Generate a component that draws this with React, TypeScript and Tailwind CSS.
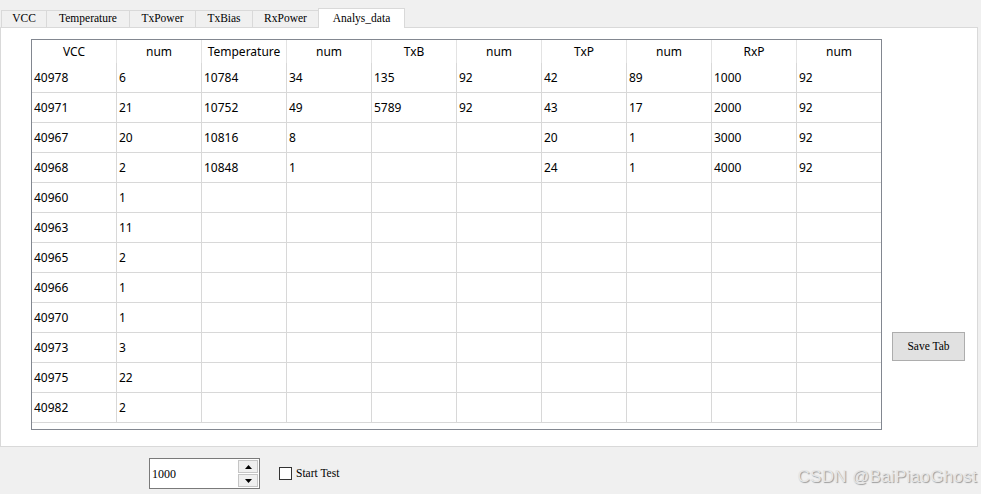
import React from 'react'

const tabs = [
  { label: 'VCC', w: 'w-[45px]' },
  { label: 'Temperature', w: 'w-[83px]' },
  { label: 'TxPower', w: 'w-[66px]' },
  { label: 'TxBias', w: 'w-[57px]' },
  { label: 'RxPower', w: 'w-[66px]' },
]

const headers = ['VCC', 'num', 'Temperature', 'num', 'TxB', 'num', 'TxP', 'num', 'RxP', 'num']

const rows: string[][] = [
  ['40978', '6', '10784', '34', '135', '92', '42', '89', '1000', '92'],
  ['40971', '21', '10752', '49', '5789', '92', '43', '17', '2000', '92'],
  ['40967', '20', '10816', '8', '', '', '20', '1', '3000', '92'],
  ['40968', '2', '10848', '1', '', '', '24', '1', '4000', '92'],
  ['40960', '1'],
  ['40963', '11'],
  ['40965', '2'],
  ['40966', '1'],
  ['40970', '1'],
  ['40973', '3'],
  ['40975', '22'],
  ['40982', '2'],
]

const serif = "font-['PMingLiU','Liberation_Serif',serif]"
const sans = "font-['Noto_Sans','Liberation_Sans',sans-serif]"

function DataTable() {
  return (
    <div className={`w-[851px] h-[391px] border border-[#828790] bg-white ${sans} text-[12px] text-black`}>
      {/* header */}
      <div className="grid grid-cols-[repeat(9,85px)_84px] h-[23px]">
        {headers.map((h, i) => (
          <div
            key={i}
            className={`flex items-center justify-center ${i < 9 ? 'border-r border-[#e3e3e3]' : ''}`}
          >
            {h}
          </div>
        ))}
      </div>
      {/* body */}
      {rows.map((r, ri) => (
        <div key={ri} className="grid grid-cols-[repeat(9,85px)_84px] h-[30px]">
          {Array.from({ length: 10 }).map((_, ci) => (
            <div
              key={ci}
              className={`flex items-center pl-[2px] border-b border-[#d8d8d8] ${ci < 9 ? 'border-r' : ''}`}
            >
              {r[ci] ?? ''}
            </div>
          ))}
        </div>
      ))}
    </div>
  )
}

export default function App() {
  return (
    <div className="relative w-[981px] h-[494px] bg-[#f0f0f0] flex flex-col overflow-hidden">
      {/* Tab bar */}
      <div className={`flex items-end h-[27px] pl-[1px] ${serif} text-[11.5px] text-black`}>
        {tabs.map((t) => (
          <div
            key={t.label}
            className={`${t.w} h-[17px] flex items-center justify-center border-t border-l border-[#d9d9d9] bg-[#f0f0f0]`}
          >
            {t.label}
          </div>
        ))}
        <div className="relative z-10 w-[87px] h-[20px] -mb-px flex items-center justify-center border border-b-0 border-[#d9d9d9] bg-white">
          Analys_data
        </div>
      </div>

      {/* Tab pane */}
      <div className="w-[978px] h-[420px] bg-white border border-[#d9d9d9] flex items-start">
        <div className="ml-[30px] mt-[11px]">
          <DataTable />
        </div>
        <button
          className={`ml-[10px] mt-[304px] w-[73px] h-[29px] bg-[#e1e1e1] border border-[#adadad] ${serif} text-[11.5px] text-black`}
        >
          Save Tab
        </button>
      </div>

      {/* Bottom controls */}
      <div className={`flex items-start pt-[11px] pl-[149px] ${serif} text-[12px] text-black`}>
        <div className="w-[111px] h-[31px] bg-white border border-[#7a7a7a] flex items-center">
          <span className="flex-1 pl-[2px]">1000</span>
          <div className="flex flex-col w-[20px] h-[27px] mr-[1px] gap-px">
            <div className="flex-1 flex items-center justify-center bg-[#efefef] border border-[#c5c5c5]">
              <svg width="7" height="4" viewBox="0 0 7 4"><path d="M3.5 0L7 4H0z" fill="#000" /></svg>
            </div>
            <div className="flex-1 flex items-center justify-center bg-[#efefef] border border-[#c5c5c5]">
              <svg width="7" height="4" viewBox="0 0 7 4"><path d="M0 0h7L3.5 4z" fill="#000" /></svg>
            </div>
          </div>
        </div>
        <div className="ml-[19px] mt-[9px] h-[13px] flex items-center leading-none">
          <div className="w-[13px] h-[13px] bg-white border border-[#333]" />
          <span className="ml-[4px] text-[11.5px]">Start Test</span>
        </div>
      </div>

      {/* Watermark */}
      <div className="absolute right-[4px] top-[464px] font-['Liberation_Sans',Arial,sans-serif] text-[17px] tracking-[0.3px] text-[#e6e6e6] [text-shadow:1px_1px_1px_#9a9a9a]">
        CSDN @BaiPiaoGhost
      </div>
    </div>
  )
}
